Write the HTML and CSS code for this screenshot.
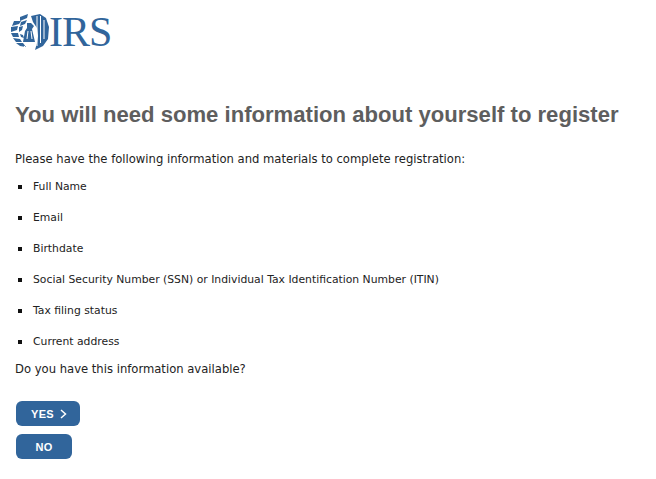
FILE: index.html
```html
<!DOCTYPE html>
<html lang="en">
<head>
    <meta charset="UTF-8">
    <meta name="viewport" content="width=device-width, initial-scale=1.0">
    <title>IRS Registration</title>
    <link rel="stylesheet" href="styles.css">
</head>
<body>
    <div class="logo">
        <svg class="seal" width="38" height="36" viewBox="0 0 38 36">
            <!-- left wreath -->
            <g class="leaves">
                <path d="M9 3l8-3-1 4-7 3z"/>
                <path d="M3 7l7 0-2 3-7 2z"/>
                <path d="M0 13l7-1-1 4-6 2z"/>
                <path d="M0 19l7 0 1 4-6 0z"/>
                <path d="M2 24l7 1 2 3-6 0z"/>
                <path d="M5 29l7 0 3 4-6-1z"/>
                <path d="M10 8l6-2-2 4-5 2z"/>
                <path d="M8 13l4-1-1 4-3 2z"/>
                <path d="M9 20l3 1 1 3-3-1z"/>
            </g>
            <!-- eagle wing and shield -->
            <path class="wing" d="M20 2l9-2 6 4 3 9-1 12-5 7-8 4 2-7 1-7-1-8-4-6z"/>
            <path class="cut" d="M26 2v30M29.500 2v27M33 6v19"/>
            <path class="wing" d="M16 9l4 0 3 3-2 3 3 13-12 0 2-11 2-3z"/>
            <path class="cut" d="M17 17l-1 8M20 17l1 8M12 34l6-6 6 6M15 34l3-3 3 3"/>
        </svg>
        <span class="logo-text">IRS</span>
    </div>

    <h1>You will need some information about yourself to register</h1>

    <p class="intro">Please have the following information and materials to complete registration:</p>
    <ul class="needed">
        <li>Full Name</li>
        <li>Email</li>
        <li>Birthdate</li>
        <li>Social Security Number (SSN) or Individual Tax Identification Number (ITIN)</li>
        <li>Tax filing status</li>
        <li>Current address</li>
    </ul>
    <p class="question">Do you have this information available?</p>

    <div class="actions">
        <button class="btn">YES
            <svg width="7" height="10" viewBox="0 0 7 10"><path d="M1 1l4.500 4-4.500 4" fill="none" stroke="#fff" stroke-width="1.500"/></svg>
        </button>
        <button class="btn btn-no">NO</button>
    </div>
</body>
</html>
```

FILE: styles.css
```css
body {
    font-family: "DejaVu Sans", Verdana, sans-serif;
    background-color: #fff;
    color: #222;
    margin: 0;
    padding: 0 15px;
}

.logo {
    display: flex;
    align-items: center;
    height: 34px;
    margin: 15px 0 0 -4px;
}

.seal .leaves path {
    fill: #31659b;
}

.seal .wing {
    fill: #31659b;
}

.seal .cut {
    fill: none;
    stroke: #fff;
    stroke-width: 1;
}

.logo-text {
    font-family: "Liberation Serif", serif;
    font-size: 42px;
    line-height: 34px;
    color: #31659b;
    letter-spacing: -1px;
}

h1 {
    font-family: "Liberation Sans", Arial, sans-serif;
    font-size: 22.1px;
    line-height: 28px;
    font-weight: bold;
    color: #5e5e5e;
    margin: 52px 0 0;
}

.intro {
    font-size: 11.6px;
    line-height: 16px;
    margin: 22px 0 0;
}

.needed {
    list-style: none;
    margin: 0;
    padding: 0 0 0 18px;
    font-size: 10.8px;
    line-height: 15px;
}

.needed li {
    margin-top: 16px;
    position: relative;
}

.needed li:first-child {
    margin-top: 12px;
}

.needed li::before {
    content: "";
    position: absolute;
    left: -15px;
    top: 6px;
    width: 4px;
    height: 4px;
    background-color: #111;
}

.question {
    font-size: 11.6px;
    line-height: 16px;
    margin: 12px 0 0;
}

.actions {
    display: flex;
    flex-direction: column;
    align-items: flex-start;
    gap: 8px;
    margin: 24px 0 0 1px;
}

.btn {
    font-family: "Liberation Sans", Arial, sans-serif;
    font-size: 11px;
    font-weight: bold;
    letter-spacing: 0.3px;
    color: #fff;
    background-color: #31659b;
    border: none;
    border-radius: 6px;
    width: 64px;
    height: 25px;
    padding: 0 0 0 2px;
    display: flex;
    align-items: center;
    justify-content: center;
    gap: 6px;
}

.btn-no {
    width: 56px;
    padding: 0;
}
```
